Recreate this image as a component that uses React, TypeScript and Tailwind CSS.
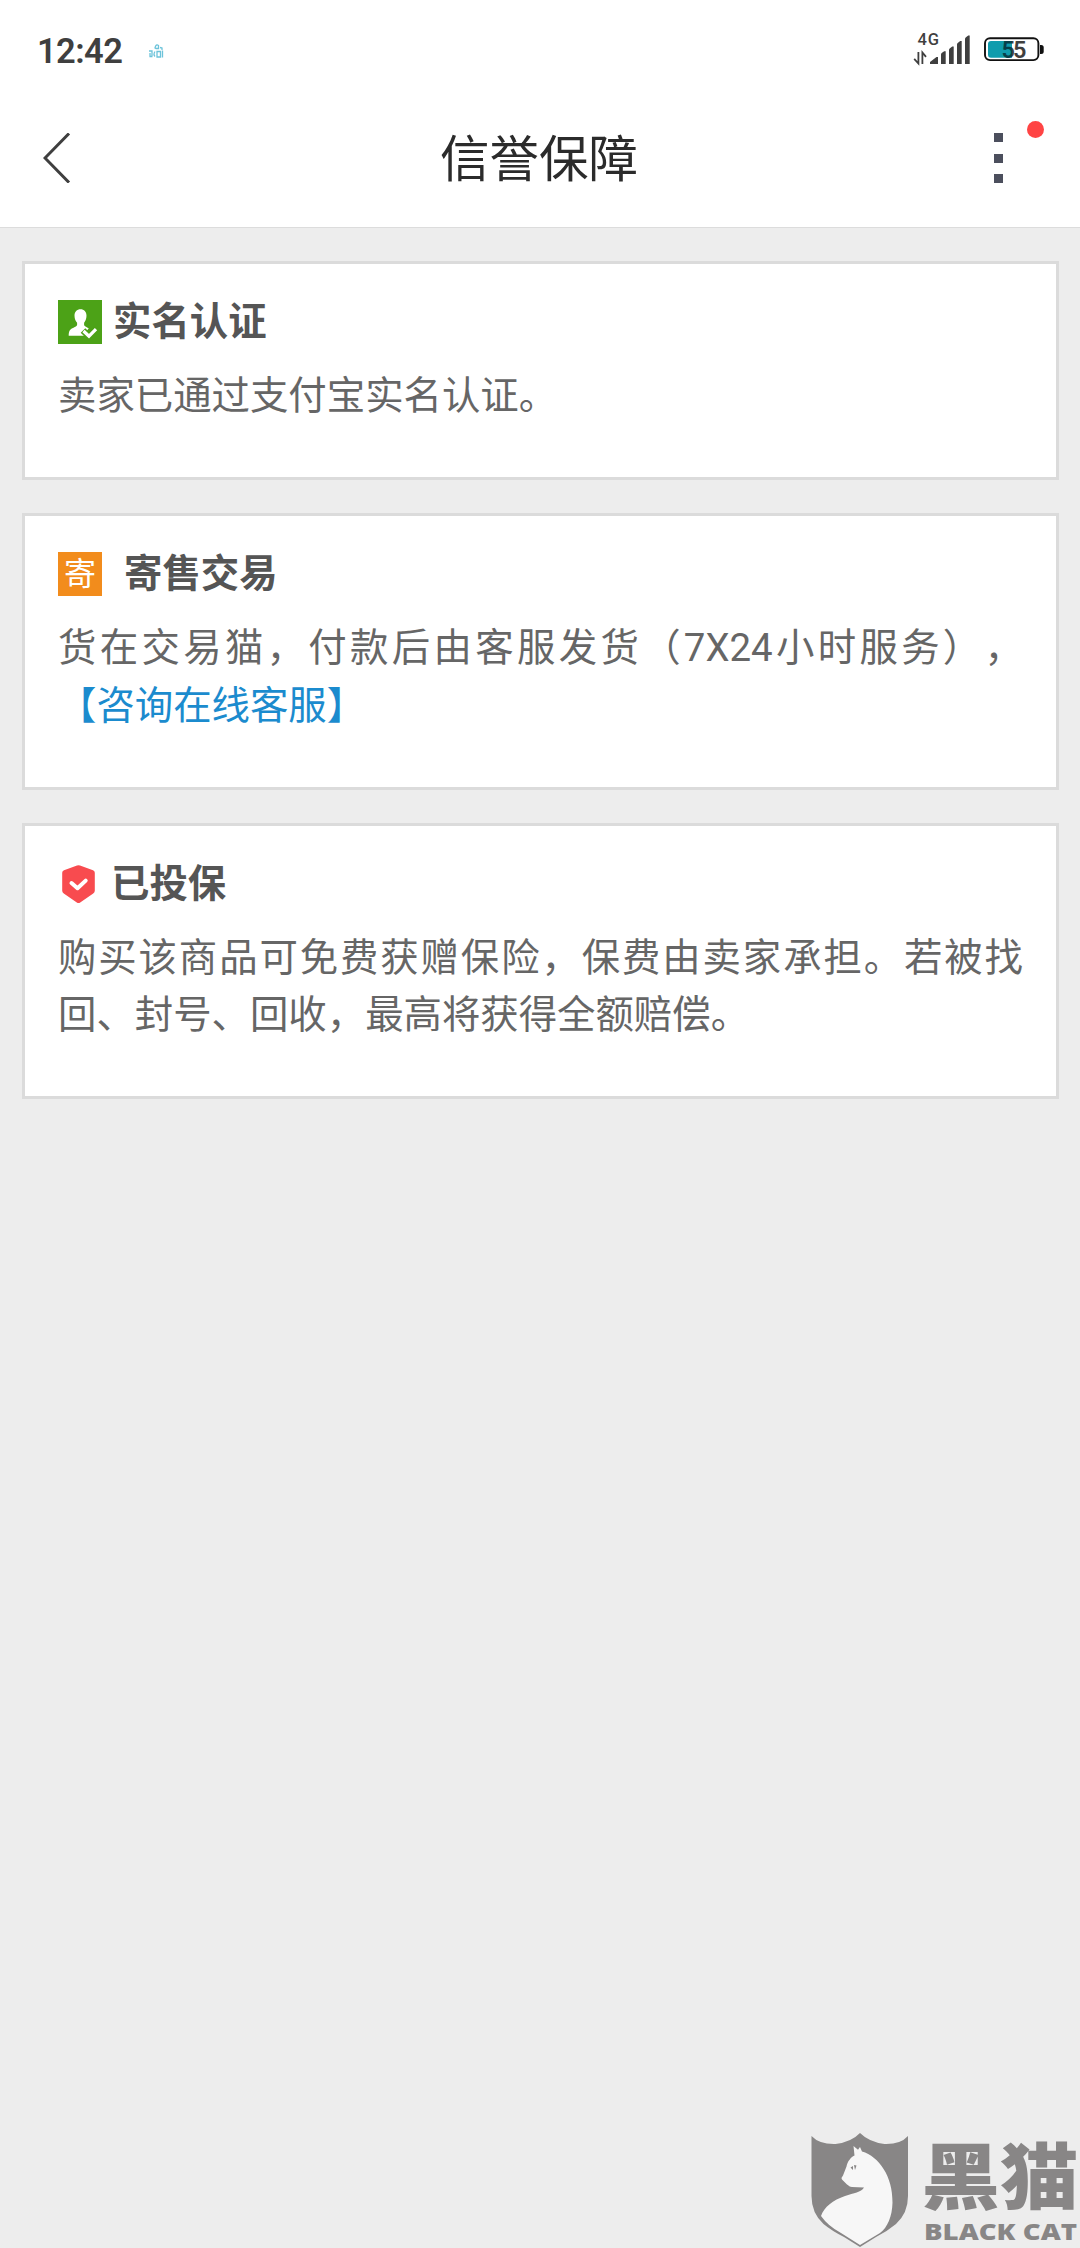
import type { ReactNode } from "react";
import clsx from "clsx";

type GuaranteeCardProps = {
  icon: ReactNode;
  title: string;
  titleClass?: string;
  children: ReactNode;
};

function StatusIcons() {
  return (
    <svg
      viewBox="913 30 133 36"
      className="mb-[5px] h-[36px] w-[133px] font-['Roboto','Inter',sans-serif]"
    >
      <defs>
        {/* digits are darker where they lie on the charged part */}
        <linearGradient id="charge" gradientUnits="userSpaceOnUse" x1="1002" y1="0" x2="1028" y2="0">
          <stop offset="0.42" stopColor="#06404a" />
          <stop offset="0.42" stopColor="#3f3f3f" />
        </linearGradient>
      </defs>
      <text x="918.5" y="45" fontSize="16.5" fontWeight="500" fill="#3f3f3f" textLength="21.5">
        4G
      </text>
      {/* data arrows */}
      <path
        d="M919.4 52v11.5l-4.2-4.6M923.4 64V52.5l3.6 4.4"
        fill="none"
        stroke="#3f3f3f"
        strokeWidth="1.8"
      />
      {/* signal bars */}
      <g fill="#3f3f3f">
        <path d="M931 64v-2l6.5-5h1.5v7z" />
        <path d="M942 64v-9.5q0-1 1-1.700l2.200-1.600h1.500V64z" />
        <path d="M950 64V50q0-1 1-1.700l2.200-1.800h1.500V64z" />
        <path d="M958 64V44.500q0-1 1-1.700l2.200-1.800h1.500V64z" />
        <path d="M966 64V39q0-1 1-1.700l2.200-1.800h1.500V64z" />
      </g>
      {/* battery */}
      <rect x="986" y="38.3" width="53.4" height="21.8" rx="5" fill="#fff" stroke="#111" strokeWidth="1.9" />
      <path d="M1041 45h1.2q2.5 0 2.5 2.500v4q0 2.500-2.500 2.500h-1.200z" fill="#111" />
      <path d="M1013 41v16.700h-21q-3 0-3-3V44q0-3 3-3z" fill="#109cad" />
      <text x="1002.5" y="57.8" fontSize="23.5" fontWeight="600" fill="url(#charge)" textLength="25">
        55
      </text>
    </svg>
  );
}

function AppBadge() {
  return (
    <svg viewBox="148 42 16 16" className="h-[16px] w-[16px]" fill="none" stroke="#6cc3da" strokeWidth="1.3">
      <path d="M149 50h3v5M150 52v3.500h2.500M155 50.500q-2 3 0 5M157 50.500h3.500v5.500h-3.500zM162.500 49.500v7" />
      <path d="M155 47q1-4.500 3.500-2.500v3h-2.500zM160 46.500l2 .500v2" />
    </svg>
  );
}

function RealNameIcon() {
  return (
    <svg viewBox="0 0 44 44" className="h-[44px] w-[44px]">
      <rect width="44" height="44" fill="#4ca217" />
      <path
        d="M22.500 9.200c3.600 0 6 2.600 6 6.500 0 3.300-1.300 5.400-2.400 7v2.500c1.200 1.400 3.200 2 4.700 3.200L26 33.500l2 2.200H10.700c0-5 1.600-6.700 4.800-8 1.800-.8 3.300-1.500 3.600-2.600v-2.400c-1.300-1.600-2.600-3.700-2.600-7 0-3.900 2.400-6.500 6-6.500z"
        fill="#fff"
      />
      <path d="M25 30.500l6 6 7.500-7.500" fill="none" stroke="#4ca217" strokeWidth="6.500" />
      <path d="M25.500 31l5.500 5.200 7-7" fill="none" stroke="#fff" strokeWidth="3.200" />
    </svg>
  );
}

function ConsignIcon() {
  return (
    <span className="flex h-[44px] w-[44px] items-center justify-center bg-[#f28c1c] text-[32px] leading-none text-white">
      寄
    </span>
  );
}

function InsuredIcon() {
  return (
    <svg viewBox="58 862 44 44" className="h-[44px] w-[44px]">
      <path
        d="M77 865.600q1.500-.8 3 0l13 4.600q1.800.7 1.800 2.500v18q0 1.800-1.600 2.800l-13 9q-1.700 1-3.400 0l-13-9q-1.600-1-1.600-2.800v-18q0-1.800 1.800-2.500z"
        fill="#f84b4f"
      />
      <path
        d="M71.500 883l6 5.200 8.200-7.600"
        fill="none"
        stroke="#fff"
        strokeWidth="4"
        strokeLinecap="round"
        strokeLinejoin="round"
      />
    </svg>
  );
}

function GuaranteeCard({ icon, title, titleClass, children }: GuaranteeCardProps) {
  return (
    <section className="border-[3px] border-[#dbdbdb] bg-white px-[33px] pt-[36px] pb-[52.4px]">
      <div className="flex h-[44px] items-center">
        {icon}
        <h2 className={clsx("text-[38.4px] leading-[44px] font-bold text-[#555]", titleClass)}>
          {title}
        </h2>
      </div>
      <p className="mt-[23px] text-justify text-[38.4px] leading-[57.6px] text-[#666] [text-spacing-trim:space-all]">
        {children}
      </p>
    </section>
  );
}

function BlackCatLogo() {
  return (
    <svg
      viewBox="805 2108 275 140"
      className="absolute right-0 bottom-0 h-[140px] w-[275px] font-['Noto_Sans_CJK_SC',sans-serif]"
    >
      <path
        d="M811.500 2136q8 8.500 24 8 16-2 24.500-11 9 9 24.500 11 16 .5 23.500-8v60q0 17-12 28-9 7.500-20 13l-16 10-16-10q-12-6-20.500-13-12-11-12-28z"
        fill="#888686"
      />
      <path
        d="M853.500 2146l4.500 3.800 2-2.800 2 4.500c17 5 31 25 30.500 51-.3 14-5 25-12.500 30.500l-20 12-19-12q-13-7-20-17c3-9 12-16 24-20 9-3 16-3.500 19-8.500l-12-.5c-2 0-3.500-1.500-5-2.500l-5-5q-1-2 1-4l3.500-9c1-5 4-9 8-11z"
        fill="#f7f7f7"
      />
      <path d="M850.500 2167.500l2.500-1.500v4zM854 2165l2.500.5-1.500 4.500z" fill="#888686" />
      <g fill="#888686">
        <text transform="translate(921.500 2203) scale(1.090 1)" fontSize="72" fontWeight="900">
          黑猫
        </text>
        <text
          x="924"
          y="2240"
          fontSize="22.5"
          fontWeight="900"
          textLength="153"
          lengthAdjust="spacingAndGlyphs"
          className="font-['Open_Sans','Noto_Sans',sans-serif]"
        >
          BLACK CAT
        </text>
      </g>
    </svg>
  );
}

export default function App() {
  return (
    <div
      lang="zh-CN"
      className="relative h-[2248px] w-[1080px] overflow-hidden bg-[#ededed] font-['Roboto','Noto_Sans_CJK_SC',sans-serif]"
    >
      <header className="flex h-[228px] flex-col border-b border-[#dcdcdc] bg-white">
        {/* Status bar */}
        <div className="flex h-[101px] items-center justify-between pr-[35px] pl-[37px]">
          <div className="flex items-center gap-[26px]">
            <span className="w-[85px] pt-px text-[34.5px] leading-none font-semibold tracking-[-0.6px] text-[#3f3f3f]">
              12:42
            </span>
            <AppBadge />
          </div>
          <StatusIcons />
        </div>

        {/* Title bar */}
        <div className="flex h-[114px] items-center justify-between pr-[35px] pl-[43px]">
          <svg viewBox="0 0 28 50" className="h-[50px] w-[28px]" fill="none" stroke="#3f3f3f" strokeWidth="3">
            <path d="M26 0.5L2 25l24 24.5" />
          </svg>
          <h1 className="ml-[13px] pt-[5px] text-[49.5px] leading-none text-[#2b2b2b]">信誉保障</h1>
          <div className="relative flex h-[50px] w-[51px] flex-col justify-between">
            <span className="h-[9px] w-[9px] bg-[#4c4f5d]" />
            <span className="h-[9px] w-[9px] bg-[#4c4f5d]" />
            <span className="h-[9px] w-[9px] bg-[#4c4f5d]" />
            <span className="absolute -top-[12px] right-[1px] h-[17px] w-[17px] rounded-full bg-[#ff4444]" />
          </div>
        </div>
      </header>

      <main className="flex flex-col gap-[33px] pt-[33px] pr-[21px] pl-[22px]">
        <GuaranteeCard icon={<RealNameIcon />} title="实名认证" titleClass="ml-[11px]">
          卖家已通过支付宝实名认证。
        </GuaranteeCard>
        <GuaranteeCard icon={<ConsignIcon />} title="寄售交易" titleClass="ml-[22px] pt-px">
          货在交易猫，付款后由客服发货（7X24小时服务），
          <a className="text-[#1b8bce]">【咨询在线客服】</a>
        </GuaranteeCard>
        <GuaranteeCard icon={<InsuredIcon />} title="已投保" titleClass="ml-[9px] pt-px">
          购买该商品可免费获赠保险，保费由卖家承担。若被找回、封号、回收，最高将获得全额赔偿。
        </GuaranteeCard>
      </main>

      <BlackCatLogo />
    </div>
  );
}
